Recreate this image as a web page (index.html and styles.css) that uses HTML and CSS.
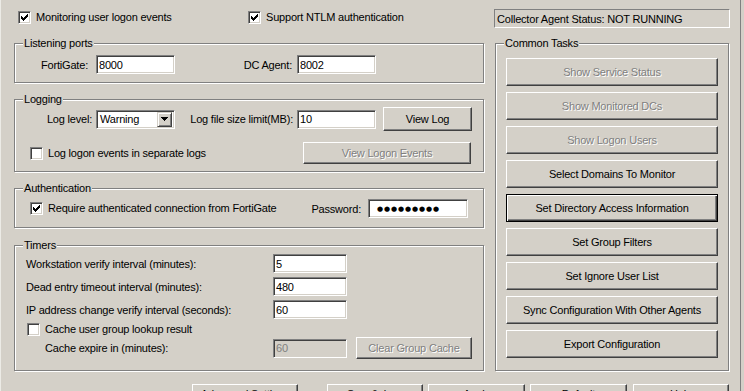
FILE: index.html
```html
<!DOCTYPE html>
<html lang="en">
<head>
<meta charset="utf-8">
<title>Collector Agent Configuration</title>
<link rel="stylesheet" href="styles.css">
</head>
<body>
<div class="window">
  <div class="top-checks">
    <div class="chk chk-mon"><span class="box"><svg class="tick" width="7" height="7" viewBox="0 0 7 7"><path d="M6 0h1v1h-1z M5 1h2v1h-2z M0 2h1v1h-1z M4 2h3v1h-3z M0 3h2v1h-2z M3 3h3v1h-3z M0 4h5v1h-5z M1 5h3v1h-3z M2 6h1v1h-1z"/></svg></span><span>Monitoring user logon events</span></div>
    <div class="chk"><span class="box"><svg class="tick" width="7" height="7" viewBox="0 0 7 7"><path d="M6 0h1v1h-1z M5 1h2v1h-2z M0 2h1v1h-1z M4 2h3v1h-3z M0 3h2v1h-2z M3 3h3v1h-3z M0 4h5v1h-5z M1 5h3v1h-3z M2 6h1v1h-1z"/></svg></span><span>Support NTLM authentication</span></div>
  </div>
  <div class="status">Collector Agent Status: NOT RUNNING</div>

  <div class="left-col">
    <section class="group g-ports">
      <span class="legend">Listening ports</span>
      <div class="row r19">
        <span class="lbl w-forti">FortiGate:</span>
        <span class="field w79">8000</span>
        <span class="lbl w-dc">DC Agent:</span>
        <span class="field w79">8002</span>
      </div>
    </section>

    <section class="group g-log">
      <span class="legend">Logging</span>
      <div class="row r24">
        <span class="lbl w-level">Log level:</span>
        <span class="select"><span class="sel-text">Warning</span><span class="drop"><svg width="7" height="4" viewBox="0 0 7 4"><path d="M0 0h7v1h-1v1h-1v1h-1v1h-1v-1h-1v-1h-1v-1h-1z"/></svg></span></span>
        <span class="lbl w-size">Log file size limit(MB):</span>
        <span class="field w79">10</span>
        <span class="btn btn-viewlog">View Log</span>
      </div>
      <div class="row r22 log-row2">
        <div class="chk"><span class="box"></span><span>Log logon events in separate logs</span></div>
        <span class="btn disabled btn-logon">View Logon Events</span>
      </div>
    </section>

    <section class="group g-auth">
      <span class="legend">Authentication</span>
      <div class="row r19 auth-row">
        <div class="chk w-req"><span class="box"><svg class="tick" width="7" height="7" viewBox="0 0 7 7"><path d="M6 0h1v1h-1z M5 1h2v1h-2z M0 2h1v1h-1z M4 2h3v1h-3z M0 3h2v1h-2z M3 3h3v1h-3z M0 4h5v1h-5z M1 5h3v1h-3z M2 6h1v1h-1z"/></svg></span><span>Require authenticated connection from FortiGate</span></div>
        <span class="lbl w-pass">Password:</span>
        <span class="field w100"><span class="dots">●●●●●●●●●</span></span>
      </div>
    </section>

    <section class="group g-timers">
      <span class="legend">Timers</span>
      <div class="trow"><span class="tlbl">Workstation verify interval (minutes):</span><span class="field w74">5</span></div>
      <div class="trow"><span class="tlbl">Dead entry timeout interval (minutes):</span><span class="field w74">480</span></div>
      <div class="trow"><span class="tlbl">IP address change verify interval (seconds):</span><span class="field w74">60</span></div>
      <div class="chk cache-chk"><span class="box"></span><span>Cache user group lookup result</span></div>
      <div class="trow last-row">
        <span class="tlbl indent">Cache expire in (minutes):</span>
        <span class="field w74 field-disabled">60</span>
        <span class="btn disabled btn-clear">Clear Group Cache</span>
      </div>
    </section>
  </div>

  <section class="group g-tasks">
    <span class="legend">Common Tasks</span>
    <span class="btn task disabled">Show Service Status</span>
    <span class="btn task disabled">Show Monitored DCs</span>
    <span class="btn task disabled">Show Logon Users</span>
    <span class="btn task">Select Domains To Monitor</span>
    <span class="btn task default">Set Directory Access Information</span>
    <span class="btn task">Set Group Filters</span>
    <span class="btn task">Set Ignore User List</span>
    <span class="btn task">Sync Configuration With Other Agents</span>
    <span class="btn task">Export Configuration</span>
  </section>

  <div class="bottom-row">
    <span class="btn bb b-adv">Advanced Settings</span>
    <span class="btn bb b-save">Save&amp;close</span>
    <span class="btn bb b-apply">Apply</span>
    <span class="btn bb b-def">Default</span>
    <span class="btn bb b-help">Help</span>
  </div>
</div>
</body>
</html>
```

FILE: styles.css
```css
* { box-sizing: border-box; }
html, body { margin: 0; padding: 0; }
body {
  background: #d4d0c8;
  font-family: "Liberation Sans", Arial, sans-serif;
  font-size: 11px;
  letter-spacing: -0.2px;
  color: #000;
  overflow: hidden;
}
.window {
  width: 744px;
  height: 391px;
  overflow: hidden;
  display: grid;
  grid-template-columns: 470px 236px;
  grid-template-rows: 19px 343px auto;
  column-gap: 10px;
  padding: 9px 0 0 14px;
  box-shadow: inset 1px 0 #ecebe6, inset -3px 0 #d4d0c8, inset -4px 0 #808080;
}

/* top row */
.top-checks { display: flex; align-items: flex-start; padding-top: 2px; }
.chk { display: flex; align-items: center; gap: 5px; white-space: nowrap; line-height: 13px; }
.chk-mon { width: 230px; margin-left: 4px; }
.box {
  width: 13px; height: 13px; flex: none;
  background: #fff;
  border: 1px solid; border-color: #808080 #fff #fff #808080;
  box-shadow: inset 1px 1px #404040, inset -1px -1px #d4d0c8;
  display: flex; align-items: center; justify-content: center;
}
.tick { display: block; fill: #000; shape-rendering: crispEdges; }
.status {
  height: 19px;
  border: 1px solid; border-color: #808080 #fff #fff #808080;
  padding-left: 2px;
  display: flex; align-items: center;
  white-space: nowrap;
}

/* group boxes */
.left-col { margin-top: 15px; display: flex; flex-direction: column; }
.group {
  position: relative;
  border: 1px solid #808080;
  box-shadow: inset 1px 1px #fff, 1px 1px #fff;
}
.legend {
  position: absolute;
  top: -7px; left: 8px;
  padding: 0 1px;
  line-height: 13px;
  background: #d4d0c8;
  white-space: nowrap;
}
.row { display: flex; align-items: center; white-space: nowrap; }
.r19 { height: 19px; }
.r22 { height: 22px; }
.r24 { height: 24px; }
.lbl { text-align: right; flex: none; }

.g-ports { height: 40px; padding-top: 11px; }
.w-forti { width: 73px; margin-right: 8px; }
.w-dc { width: 117px; margin-right: 5px; }

.g-log { height: 73px; margin-top: 16px; padding-top: 7px; }
.w-level { width: 77px; margin-right: 4px; }
.w-size { width: 118px; margin-right: 4px; }
.btn-viewlog { width: 89px; height: 24px; margin-left: 7px; }
.log-row2 { margin-top: 11px; padding: 0 12px 0 15px; }
.btn-logon { width: 168px; height: 22px; margin-left: auto; }

.g-auth { height: 40px; margin-top: 16px; padding-top: 10px; }
.auth-row { padding-left: 15px; }
.w-req { width: 273px; }
.w-pass { width: 58px; margin-right: 7px; }

.g-timers { height: 126px; margin-top: 17px; padding: 8px 0 0 11px; }
.trow { display: flex; align-items: center; height: 19px; margin-bottom: 4px; white-space: nowrap; }
.tlbl { width: 247px; flex: none; }
.tlbl.indent { padding-left: 19px; }
.cache-chk { margin: 2px 0 0 1px; height: 13px; }
.last-row { height: 22px; margin-top: 1px; }
.btn-clear { width: 116px; height: 22px; margin-left: 9px; }

/* fields */
.field {
  flex: none;
  height: 19px;
  background: #fff;
  border: 1px solid; border-color: #808080 #fff #fff #808080;
  box-shadow: inset 1px 1px #404040, inset -1px -1px #d4d0c8;
  padding: 0 2px;
  display: flex; align-items: center;
  white-space: nowrap;
}
.w79 { width: 79px; }
.w74 { width: 74px; }
.w100 { width: 100px; }
.field-disabled { background: #d4d0c8; color: #808080; }
.dots { font-family: "DejaVu Sans", sans-serif; font-size: 7px; letter-spacing: 0.9px; padding-left: 6px; }

.select {
  flex: none;
  width: 79px; height: 19px;
  background: #fff;
  border: 1px solid; border-color: #808080 #fff #fff #808080;
  box-shadow: inset 1px 1px #404040, inset -1px -1px #d4d0c8;
  padding: 2px;
  display: flex; align-items: center;
}
.sel-text { flex: 1; padding-left: 1px; }
.drop {
  width: 15px; height: 15px;
  background: #d4d0c8;
  border: 1px solid; border-color: #d4d0c8 #404040 #404040 #d4d0c8;
  box-shadow: inset 1px 1px #fff, inset -1px -1px #808080;
  display: flex; align-items: center; justify-content: center;
}
.drop svg { display: block; fill: #000; shape-rendering: crispEdges; }

/* buttons */
.btn {
  flex: none;
  background: #d4d0c8;
  border: 1px solid; border-color: #fff #404040 #404040 #fff;
  box-shadow: inset -1px -1px #808080;
  display: flex; align-items: center; justify-content: center;
  white-space: nowrap;
}
.btn.disabled { color: #808080; text-shadow: 1px 1px #fff; }
.btn.default {
  border-color: #000;
  box-shadow: inset 1px 1px #fff, inset -1px -1px #404040, inset -2px -2px #808080;
}

.g-tasks {
  margin: 15px 1px 0 1px;
  height: 328px;
  padding: 14px 0 0 10px;
  display: flex; flex-direction: column; gap: 6px;
}
.task { width: 212px; height: 28px; }

.bottom-row {
  grid-column: 1 / -1;
  margin-top: 13px;
  padding-left: 178px;
  display: flex;
}
.bb { height: 23px; align-items: flex-start; padding-top: 3px; }
.b-adv { width: 106px; }
.b-save { width: 96px; margin-left: 29px; }
.b-apply { width: 97px; margin-left: 5px; }
.b-def { width: 97px; margin-left: 5px; }
.b-help { width: 96px; margin-left: 6px; }
```
